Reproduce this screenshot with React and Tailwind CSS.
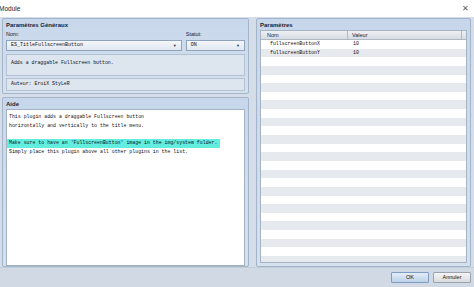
import React from "react";

const sans = { fontFamily: '"Liberation Sans", Arial, sans-serif' };
const mono = { fontFamily: '"Liberation Mono", "DejaVu Sans Mono", monospace' };

const params = [
  { name: "fullscreenButtonX", value: "10" },
  { name: "fullscreenButtonY", value: "10" },
];

function Panel({ title, className, children }) {
  return (
    <div
      className={`flex flex-col rounded-[2px] border border-[#a3b5cb] bg-gradient-to-b from-[#c7d7eb] to-[#d6e1ee] px-[2px] ${className}`}
    >
      <div className="h-[11px] pl-[1px] pt-[3px] text-[6px] font-bold leading-[6px] text-[#14243a]">
        {title}
      </div>
      {children}
    </div>
  );
}

function Select({ value, className }) {
  return (
    <div
      className={`flex h-[11px] items-center justify-between border border-[#8fa3bb] bg-gradient-to-b from-[#f4f7fb] to-[#e1e8f1] px-[4px] ${className}`}
    >
      <span className="text-[5px] leading-none text-[#111]" style={mono}>
        {value}
      </span>
      <span className="text-[4px] leading-none text-[#333]">▼</span>
    </div>
  );
}

export default function App() {
  const rows = Array.from({ length: 26 }, (_, i) => params[i] || null);

  return (
    <div className="flex h-[287px] w-[474px] flex-col overflow-hidden bg-[#d4dde8]" style={sans}>
      {/* title bar */}
      <div className="flex h-[17px] shrink-0 items-center justify-between bg-white pr-[5px]">
        <span className="-ml-[1px] text-[6.5px] text-[#222]">Module</span>
        <span className="text-[8px] font-light leading-none text-[#555]">✕</span>
      </div>

      <div className="flex h-[250px] shrink-0 gap-[7px] pl-[2px] pt-[1px]">
        {/* left column */}
        <div className="flex w-[247px] flex-col gap-[3px]">
          <Panel title="Paramètres Généraux" className="h-[76px]">
            <div className="flex gap-[4px] px-[1px]">
              <div className="flex w-[178px] flex-col">
                <span className="h-[10px] pt-[1px] text-[5.5px] leading-[6px] text-[#14243a]">Nom:</span>
                <Select value="ES_TitleFullscreenButton" />
              </div>
              <div className="flex w-[60px] flex-col">
                <span className="h-[10px] pt-[1px] text-[5.5px] leading-[6px] text-[#14243a]">Statut:</span>
                <Select value="ON" />
              </div>
            </div>
            <div
              className="mx-[1px] mt-[3px] h-[22px] border border-[#b3c1d2] bg-[#dde5ef] px-[4px] pt-[5px] text-[4.9px] leading-[6px] text-[#111]"
              style={mono}
            >
              Adds a draggable Fullscreen button.
            </div>
            <div
              className="mx-[1px] mt-[2px] flex h-[13px] items-center border border-[#b3c1d2] bg-[#dde5ef] px-[4px] text-[4.9px] leading-none text-[#111]"
              style={mono}
            >
              Auteur: EroiX StyLeR
            </div>
          </Panel>

          <Panel title="Aide" className="h-[170px]">
            <div
              className="mx-[1px] h-[157px] border border-[#a5b3c4] bg-white pt-[3px] text-[4.9px] leading-[8.7px] text-[#111]"
              style={mono}
            >
              <div className="pl-[2px]">This plugin adds a draggable Fullscreen button</div>
              <div className="pl-[2px]">horizontally and vertically to the title menu.</div>
              <div className="h-[8.7px]" />
              <div className="w-[213px] bg-[#62eedf] pl-[2px]">
                Make sure to have an 'FullscreenButton' image in the img/system folder.
              </div>
              <div className="pl-[2px]">Simply place this plugin above all other plugins in the list.</div>
            </div>
          </Panel>
        </div>

        {/* right column */}
        <Panel title="Paramètres" className="h-[249px] w-[215px]">
          <div className="mx-[1px] flex h-[233px] flex-col overflow-hidden border border-[#a5b3c4] bg-white">
            <div className="flex h-[9px] shrink-0 border-b border-[#b0b8c3] bg-gradient-to-b from-[#eef1f4] to-[#d6dbe2] text-[5.5px] leading-[9px] text-[#14243a]">
              <div className="w-[87px] border-r border-[#b0b8c3] pl-[6px]">Nom</div>
              <div className="w-[114px] border-r border-[#b0b8c3] pl-[4px]">Valeur</div>
              <div className="flex-1" />
            </div>
            {rows.map((r, i) => (
              <div
                key={i}
                className={`flex h-[8.65px] shrink-0 text-[4.9px] leading-[8.65px] text-[#111] ${
                  i % 2 === 0 ? "bg-white" : "bg-[#e6e9ee]"
                }`}
                style={mono}
              >
                <div className="w-[87px] pl-[9px]">{r ? r.name : ""}</div>
                <div className="pl-[5px]">{r ? r.value : ""}</div>
              </div>
            ))}
          </div>
        </Panel>
      </div>

      {/* bottom bar */}
      <div className="flex flex-1 items-start justify-end gap-[4px] border-t border-[#c3cedb] bg-[#d0d9e4] pr-[3px] pt-[4px]">
        <button className="h-[11px] w-[38px] rounded-[1px] border border-[#7f9dc0] bg-gradient-to-b from-[#e3edf8] to-[#bcd1e8] text-[5.5px] leading-none text-[#111]">
          OK
        </button>
        <button className="h-[11px] w-[38px] rounded-[1px] border border-[#9aa3ae] bg-gradient-to-b from-[#f5f5f5] to-[#d9dcdf] text-[5.5px] leading-none text-[#111]">
          Annuler
        </button>
      </div>
    </div>
  );
}
